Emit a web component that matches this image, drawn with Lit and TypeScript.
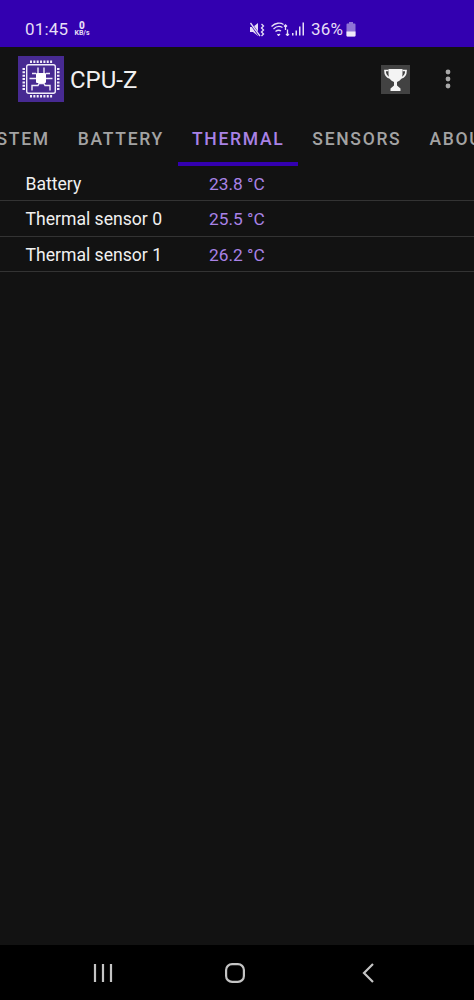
import { LitElement, html, css, svg } from "lit";
import { customElement } from "lit/decorators.js";

const rows = [
  ["Battery", "23.8 °C"],
  ["Thermal sensor 0", "25.5 °C"],
  ["Thermal sensor 1", "26.2 °C"],
];

const chipTicks = [0, 1, 2, 3, 4, 5, 6].map((i) => 13 + i * 3.35);

@customElement("app-root")
export class AppRoot extends LitElement {
  static styles = css`
    :host {
      display: flex;
      flex-direction: column;
      width: 474px;
      height: 1000px;
      overflow: hidden;
      background: #121212;
      font-family: Roboto, "Liberation Sans", sans-serif;
      color: #f2f2f2;
    }
    .status {
      height: 47px;
      flex: none;
      background: #3300b0;
      display: flex;
      align-items: center;
      padding: 11px 0 0 25px;
      box-sizing: border-box;
      color: #e6def6;
    }
    .time { font-size: 17px; letter-spacing: 0.2px; width: 48px; }
    .kbs {
      display: flex; flex-direction: column; align-items: center;
      font-weight: 700; margin-left: 0; width: 18px;
    }
    .kbs b { font-size: 10px; line-height: 9px; }
    .kbs span { font-size: 7px; line-height: 7px; }
    .right {
      display: flex; align-items: center;
      margin-left: 158px;
    }
    .s-wifi { margin-left: 6px; }
    .s-signal { margin-left: 2px; }
    .s-batt { margin-left: 3px; }
    .pct { font-size: 17px; margin-left: 6px; letter-spacing: 0.2px; }
    .toolbar {
      height: 66px;
      flex: none;
      display: flex;
      align-items: center;
      padding: 0 0 2px 18px;
      box-sizing: border-box;
    }
    .logo { width: 46px; height: 46px; display: block; flex: none; }
    .title { font-size: 24px; margin: 2px 0 0 6px; color: #f0f0f0; flex: 1; }
    .trophy { width: 29px; height: 29px; display: block; flex: none; }
    .more { width: 6px; height: 20px; margin: 0 23px 0 35px; display: block; flex: none; }
    .tabs {
      height: 53px;
      flex: none;
      display: flex;
      overflow: hidden;
    }
    .tabs-inner {
      display: flex;
      margin-left: -42px;
      flex: none;
    }
    .tab {
      flex: none;
      box-sizing: border-box;
      height: 53px;
      padding: 16px 14px 0;
      font-size: 17.500px;
      font-weight: 500;
      letter-spacing: 1.700px;
      color: #a3a3a3;
      white-space: nowrap;
      text-align: center;
    }
    .tab.active {
      color: #a982e6;
      border-bottom: 4px solid #3300b0;
    }
    .list { display: flex; flex-direction: column; }
    .row {
      height: 35.300px;
      box-sizing: border-box;
      border-bottom: 1px solid #333333;
      display: flex;
      align-items: center;
      padding: 2px 0 0 25.500px;
    }
    .name { width: 183.500px; color: #f0f0f0; font-size: 17.600px; }
    .val { color: #a982e6; font-size: 17.300px; }
    .spacer { flex: 1; }
    .nav {
      height: 55px;
      flex: none;
      background: #000;
      display: flex;
      align-items: center;
    }
    .nav svg { display: block; flex: none; }
    .i-recent { margin-left: 93px; }
    .i-home { margin-left: 112px; }
    .i-back { margin-left: 117px; }
  `;

  render() {
    return html`
      <div class="status">
        <span class="time">01:45</span>
        <span class="kbs"><b>0</b><span>KB/s</span></span>
        <div class="right">
          <svg width="16" height="15" viewBox="0 0 16 15" fill="none">
            <path d="M1 5h3l5-4v13l-5-4H1z" fill="#e6def6"/>
            <path d="M1 .5l10 14" stroke="#3300b0" stroke-width="2.500"/>
            <path d="M1.500 1L11 14" stroke="#e6def6" stroke-width="1.300"/>
            <path d="M12.500 2l2 2-2 2 2 2-2 2 2 2-2 2" stroke="#e6def6" stroke-width="1.300"/>
          </svg>
          <svg class="s-wifi" width="19" height="14" viewBox="0 0 19 14" fill="none" stroke="#e6def6" stroke-width="1.300">
            <path d="M.5 4.500C4.500 .5 9.500 .5 12.500 2.500"/>
            <path d="M2.500 7C5.500 4 9 4 11.500 5.500"/>
            <path d="M4.500 9.500C6.500 8 8.500 8 10 9"/>
            <path d="M6.500 12l1 1.500 1.500-1.500"/>
            <path d="M14.500 3v5M13 4.500L14.500 3 16 4.500M16.500 7.500v6M15 12l1.500 1.500L18 12"/>
          </svg>
          <svg class="s-signal" width="13" height="14" viewBox="0 0 13 14" fill="#e6def6">
            <rect x="0" y="11" width="1.500" height="2.500"/>
            <rect x="3.500" y="8.500" width="1.500" height="5"/>
            <rect x="7" y="4.500" width="1.500" height="9"/>
            <rect x="10.500" y="0.500" width="1.500" height="13"/>
          </svg>
          <span class="pct">36%</span>
          <svg class="s-batt" width="10" height="15" viewBox="0 0 10 15">
            <path d="M3 0h4v1.500h1.500q1 0 1 1V13.500q0 1-1 1h-7q-1 0-1-1V2.500q0-1 1-1H3z" fill="#8f74d6"/>
            <path d="M.5 9.500h9v4q0 1-1 1h-7q-1 0-1-1z" fill="#efe9fa"/>
          </svg>
        </div>
      </div>

      <div class="toolbar">
        <svg class="logo" viewBox="0 0 46 46">
          <rect width="46" height="46" fill="#472a92"/>
          <g fill="none" stroke="#f1edf9" stroke-width="1.400">
            <rect x="8.700" y="8.700" width="28.600" height="28.600" rx="2"/>
            <path d="M11.500 22.500H18M28 22.500h6.500M20 11.500V17M26 11.500V17M14 17.500h4M28 17.500h4"/>
            <path d="M14 34.500v-5h6l1-2h5l1 2h5v5"/>
          </g>
          <rect x="18" y="17" width="10" height="10" rx="1" fill="#fff"/>
          <g fill="none" stroke="#f1edf9" stroke-width="2">
            ${chipTicks.map((p) => svg`
              <path d="M${p} 4.500v2.500M${p} 39v2.500M4.500 ${p}h2.500M39 ${p}h2.500"/>
            `)}
          </g>
        </svg>
        <span class="title">CPU-Z</span>
        <svg class="trophy" viewBox="0 0 29 29">
          <rect width="29" height="29" fill="#424242"/>
          <path d="M7.500 4h14v5q0 6-5.500 8v3.500l3.500 3V26h-10v-2.500l3.500-3V17q-5.500-2-5.500-8z" fill="#f4f4f4"/>
          <path d="M7.500 5.500H4q0 6 5 7.500M21.500 5.500H25q0 6-5 7.500" fill="none" stroke="#f4f4f4" stroke-width="1.700"/>
        </svg>
        <svg class="more" viewBox="0 0 6 20" fill="#a8a8a8">
          <circle cx="3" cy="3" r="2.400"/>
          <circle cx="3" cy="10" r="2.400"/>
          <circle cx="3" cy="17" r="2.400"/>
        </svg>
      </div>

      <div class="tabs">
        <div class="tabs-inner">
          <div class="tab">SYSTEM</div>
          <div class="tab">BATTERY</div>
          <div class="tab active">THERMAL</div>
          <div class="tab">SENSORS</div>
          <div class="tab">ABOUT</div>
        </div>
      </div>

      <div class="list">
        ${rows.map(
          ([n, v]) => html`<div class="row"><span class="name">${n}</span><span class="val">${v}</span></div>`
        )}
      </div>
      <div class="spacer"></div>

      <div class="nav">
        <svg class="i-recent" width="20" height="18" viewBox="0 0 20 18" stroke="#c4c4c4" stroke-width="2.200">
          <path d="M2 0v18M10 0v18M18 0v18"/>
        </svg>
        <svg class="i-home" width="20" height="20" viewBox="0 0 20 20" fill="none" stroke="#c4c4c4" stroke-width="2.200">
          <rect x="1.100" y="1.100" width="17.800" height="17.800" rx="6"/>
        </svg>
        <svg class="i-back" width="12" height="20" viewBox="0 0 12 20" fill="none" stroke="#c4c4c4" stroke-width="2.200">
          <path d="M11 1L2 10l9 9"/>
        </svg>
      </div>
    `;
  }
}
